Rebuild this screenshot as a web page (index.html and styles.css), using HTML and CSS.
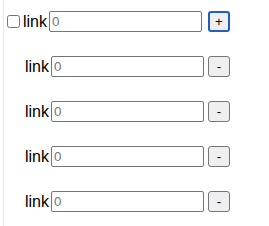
FILE: index.html
```html
<!DOCTYPE html>
<html lang="en">
<head>
    <meta charset="UTF-8">
    <title>Links</title>
    <link rel="stylesheet" href="styles.css">
</head>
<body>
    <div class="tree">
        <div class="row first">
            <input type="checkbox" class="check">
            <span class="label">link</span>
            <input type="text" class="field" placeholder="0">
            <button class="btn add">+</button>
        </div>
        <div class="row child">
            <span class="label">link</span>
            <input type="text" class="field" placeholder="0">
            <button class="btn">-</button>
        </div>
        <div class="row child">
            <span class="label">link</span>
            <input type="text" class="field" placeholder="0">
            <button class="btn">-</button>
        </div>
        <div class="row child">
            <span class="label">link</span>
            <input type="text" class="field" placeholder="0">
            <button class="btn">-</button>
        </div>
        <div class="row child">
            <span class="label">link</span>
            <input type="text" class="field" placeholder="0">
            <button class="btn">-</button>
        </div>
    </div>
</body>
</html>
```

FILE: styles.css
```css
body {
    margin: 0;
    font-family: "Liberation Sans", Arial, sans-serif;
    font-size: 16px;
    color: #000;
    background: #fff;
}
.tree {
    margin-left: 3px;
    border-left: 1px solid #e8e8e8;
    height: 226px;
    box-sizing: border-box;
    padding-top: 11px;
    display: flex;
    flex-direction: column;
    gap: 24px;
}
.row {
    display: flex;
    align-items: center;
    height: 21px;
}
.child {
    padding-left: 21px;
}
.check {
    margin: 0 3px 0 3px;
    width: 13px;
    height: 13px;
}
.label {
    line-height: 21px;
}
.field {
    width: 153px;
    height: 21px;
    box-sizing: border-box;
    margin: 0 0 0 2px;
    padding: 1px 2px;
    border: 1px solid #767676;
    border-radius: 2px;
    font-family: "Liberation Sans", Arial, sans-serif;
    font-size: 13.33px;
}
.field::placeholder {
    color: #757575;
}
.btn {
    margin-left: 6px;
    width: 22px;
    height: 21px;
    padding: 0;
    border: 1px solid #767676;
    border-radius: 3px;
    background: #efefef;
    font-family: "Liberation Sans", Arial, sans-serif;
    font-size: 13.33px;
    color: #000;
}
.child .btn {
    margin-left: 4px;
}
.add {
    border: 2px solid #1f5fbf;
}
```
